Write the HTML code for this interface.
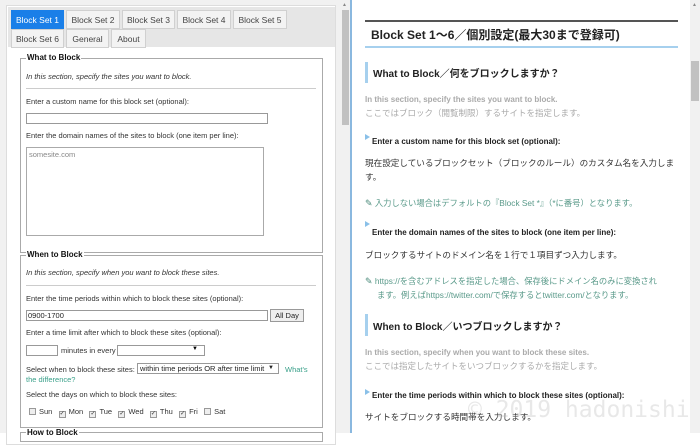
<!DOCTYPE html>
<html><head><meta charset="utf-8"><style>
*{margin:0;padding:0;box-sizing:border-box}
body{width:700px;height:433px;overflow:hidden;background:#fff;font-family:"Liberation Sans",Arial,sans-serif;position:relative}
.a{position:absolute;white-space:nowrap}
#L{position:absolute;left:0;top:0;width:350px;height:433px;background:#f1f1f1;border-right:1px solid #ddd}
#Lin{position:absolute;left:6px;top:5px;width:330px;height:440px;background:#fff;border:1px solid #ddd}
.tabs{position:absolute;left:8px;top:7px;width:327px;height:40px;background:#e6e6e6}
.tab{position:absolute;height:19px;font-size:8.5px;color:#444;background:#f3f3f3;border:1px solid #d0d0d0;text-align:center;line-height:18px}
.tab.on{background:#1a7fe8;color:#fff;border-color:#1a7fe8}
fieldset{position:absolute;border:1px solid #aaa}
.lg{position:absolute;background:#fff;font-weight:bold;font-size:8px;color:#111;padding:0 1px}
.s{font-size:7.5px;color:#333}
.i{font-size:7.5px;color:#333;font-style:italic}
.inp{position:absolute;border:1px solid #999;background:#fff}
.sb{position:absolute;background:#f1f1f1}
.th{position:absolute;background:#c1c1c1}
.cb{display:inline-block;width:7px;height:7px;border:1px solid #999;background:#eee;vertical-align:-1px;margin-right:3px;font-size:6px;line-height:5px;text-align:center}
#R{position:absolute;left:350px;top:0;width:350px;height:433px;background:#fff;border-left:2px solid #8ab8df}
.j{font-family:"Liberation Sans","Noto Sans CJK JP",sans-serif}
.rt{font-size:8.6px;color:#333}
.g{font-size:8.5px;color:#aaa}
.b{font-size:8px;font-weight:bold;color:#222}
.tri{position:absolute;width:0;height:0;border-top:3px solid transparent;border-bottom:3px solid transparent;border-left:5px solid #8ac0e8}
.h3{position:absolute;left:365px;width:3px;background:#a6d0ee}
.pen{color:#4a8a7a;font-size:9px}
.grn{color:#5a9a8a;font-size:8.3px}
</style></head><body>
<div id="L">
<div id="Lin"></div>
<div class="tabs"></div>
<div class="tab on" style="left:11px;top:10px;width:53px">Block Set 1</div>
<div class="tab" style="left:66px;top:10px;width:54px">Block Set 2</div>
<div class="tab" style="left:122px;top:10px;width:53px">Block Set 3</div>
<div class="tab" style="left:177px;top:10px;width:54px">Block Set 4</div>
<div class="tab" style="left:233px;top:10px;width:54px">Block Set 5</div>
<div class="tab" style="left:11px;top:29px;width:53px">Block Set 6</div>
<div class="tab" style="left:66px;top:29px;width:43px">General</div>
<div class="tab" style="left:111px;top:29px;width:35px">About</div>

<fieldset style="left:20px;top:58px;width:303px;height:195px"></fieldset>
<div class="lg" style="left:26px;top:53px">What to Block</div>
<div class="a i" style="left:26px;top:72px">In this section, specify the sites you want to block.</div>
<div class="a" style="left:26px;top:88px;width:290px;height:1px;background:#ccc"></div>
<div class="a s" style="left:26px;top:97px">Enter a custom name for this block set (optional):</div>
<div class="inp" style="left:26px;top:113px;width:242px;height:11px"></div>
<div class="a s" style="left:26px;top:131px">Enter the domain names of the sites to block (one item per line):</div>
<div class="inp" style="left:26px;top:147px;width:238px;height:89px;border-color:#aaa"><span style="font-size:7.5px;color:#888;position:absolute;left:2px;top:2px">somesite.com</span></div>

<fieldset style="left:20px;top:255px;width:303px;height:173px"></fieldset>
<div class="lg" style="left:26px;top:250px">When to Block</div>
<div class="a i" style="left:26px;top:268px">In this section, specify when you want to block these sites.</div>
<div class="a" style="left:26px;top:285px;width:290px;height:1px;background:#ccc"></div>
<div class="a s" style="left:26px;top:294px">Enter the time periods within which to block these sites (optional):</div>
<div class="inp" style="left:26px;top:310px;width:242px;height:11px;font-size:7.5px;line-height:9px;padding-left:1px;color:#222">0900-1700</div>
<div class="inp" style="left:270px;top:309px;width:34px;height:13px;background:#eee;font-size:7.5px;text-align:center;line-height:11px;color:#222">All Day</div>
<div class="a s" style="left:26px;top:328px">Enter a time limit after which to block these sites (optional):</div>
<div class="inp" style="left:26px;top:345px;width:32px;height:11px"></div>
<div class="a s" style="left:61px;top:346px">minutes in every</div>
<div class="inp" style="left:117px;top:345px;width:88px;height:11px"><span style="position:absolute;right:6px;top:0;font-size:6px">▼</span></div>
<div class="a s" style="left:26px;top:365px">Select when to block these sites:</div>
<div class="inp" style="left:137px;top:363px;width:142px;height:11px;font-size:7.5px;line-height:9px;padding-left:2px;color:#222">within time periods OR after time limit<span style="position:absolute;right:4px;top:0;font-size:6px">▼</span></div>
<div class="a" style="left:285px;top:365px;font-size:7.5px;color:#3aa08a">What's</div>
<div class="a" style="left:26px;top:375px;font-size:7.5px;color:#3aa08a">the difference?</div>
<div class="a s" style="left:26px;top:390px">Select the days on which to block these sites:</div>
<div class="a s" style="left:29px;top:407px"><span class="cb"></span>Sun &nbsp;&nbsp;<span class="cb">✓</span>Mon &nbsp;&nbsp;<span class="cb">✓</span>Tue &nbsp;&nbsp;<span class="cb">✓</span>Wed &nbsp;&nbsp;<span class="cb">✓</span>Thu &nbsp;&nbsp;<span class="cb">✓</span>Fri &nbsp;&nbsp;<span class="cb"></span>Sat</div>
<fieldset style="left:20px;top:432px;width:303px;height:10px"></fieldset>
<div class="lg" style="left:26px;top:428px">How to Block</div>

<div class="sb" style="left:341px;top:0;width:9px;height:433px"></div>
<div class="th" style="left:342px;top:10px;width:7px;height:115px"></div>
<div class="a" style="left:342px;top:2px;font-size:5px;color:#888">▲</div>
</div>

<div id="R">
<div class="a" style="left:13px;top:20px;width:313px;height:2px;background:#555"></div>
<div class="a j" style="left:19px;top:26px;font-size:12px;font-weight:bold;color:#222">Block Set 1〜6／個別設定(最大30まで登録可)</div>
<div class="a" style="left:13px;top:46px;width:313px;height:2px;background:#a6d0ee"></div>
</div>
<div class="h3" style="top:62px;height:21px"></div>
<div class="a j" style="left:373px;top:65px;font-size:10px;font-weight:bold;color:#222">What to Block／何をブロックしますか？</div>
<div class="a j g" style="left:365px;top:95px;font-weight:bold;font-size:8px">In this section, specify the sites you want to block.</div>
<div class="a j g" style="left:365px;top:107px">ここではブロック（閲覧制限）するサイトを指定します。</div>
<div class="tri" style="left:365px;top:134px"></div>
<div class="a j b" style="left:372px;top:137px">Enter a custom name for this block set (optional):</div>
<div class="a j rt" style="left:365px;top:157px">現在設定しているブロックセット（ブロックのルール）のカスタム名を入力しま</div>
<div class="a j rt" style="left:365px;top:171px">す。</div>
<div class="a j grn" style="left:365px;top:197px"><span class="pen">✎</span> 入力しない場合はデフォルトの『Block Set *』（*に番号）となります。</div>
<div class="tri" style="left:365px;top:221px"></div>
<div class="a j b" style="left:372px;top:228px">Enter the domain names of the sites to block (one item per line):</div>
<div class="a j rt" style="left:365px;top:249px">ブロックするサイトのドメイン名を１行で１項目ずつ入力します。</div>
<div class="a j grn" style="left:365px;top:275px"><span class="pen">✎</span> https://を含むアドレスを指定した場合、保存後にドメイン名のみに変換され</div>
<div class="a j grn" style="left:377px;top:289px">ます。例えばhttps://twitter.com/で保存するとtwitter.com/となります。</div>
<div class="h3" style="top:314px;height:22px"></div>
<div class="a j" style="left:373px;top:318px;font-size:10px;font-weight:bold;color:#222">When to Block／いつブロックしますか？</div>
<div class="a j g" style="left:365px;top:348px;font-weight:bold;font-size:8px">In this section, specify when you want to block these sites.</div>
<div class="a j g" style="left:365px;top:360px">ここでは指定したサイトをいつブロックするかを指定します。</div>
<div class="tri" style="left:365px;top:389px"></div>
<div class="a j b" style="left:372px;top:391px">Enter the time periods within which to block these sites (optional):</div>
<div class="a j rt" style="left:365px;top:411px">サイトをブロックする時間帯を入力します。</div>
<div class="a" style="left:468px;top:397px;font-family:'DejaVu Sans Mono',monospace;font-size:23px;color:rgba(180,180,180,0.3)">© 2019 hadonishi</div>
<div class="sb" style="left:690px;top:0;width:10px;height:433px"></div>
<div class="th" style="left:691px;top:61px;width:8px;height:40px"></div>
<div class="a" style="left:692px;top:2px;font-size:5px;color:#888">▲</div>
</body></html>
